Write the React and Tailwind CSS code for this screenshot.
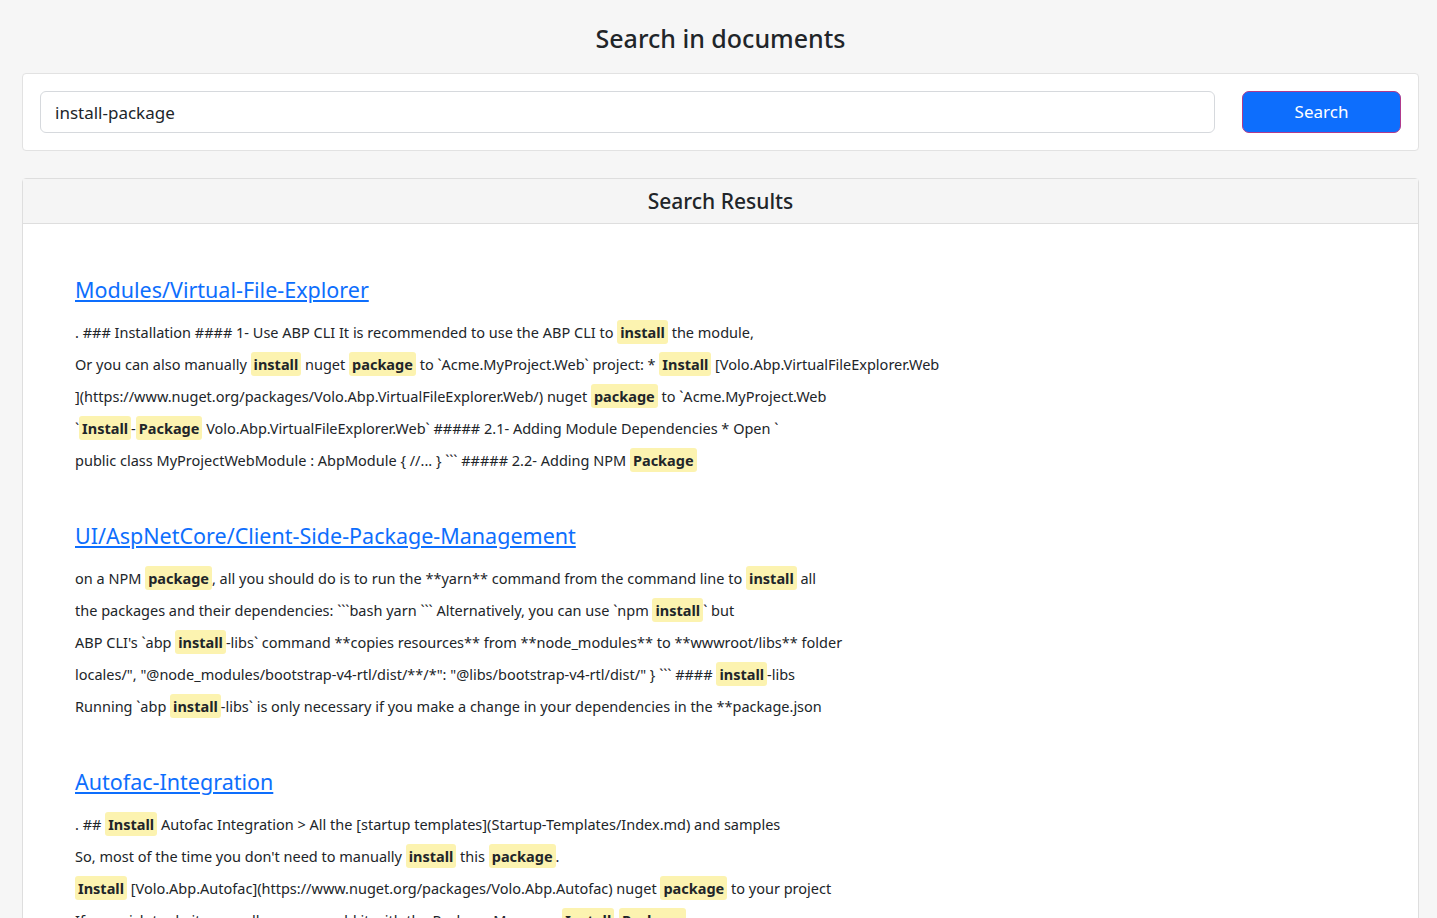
import React from 'react';

const results = [
    {
        title: 'Modules/Virtual-File-Explorer',
        lines: [
            ['. ### Installation #### 1- Use ABP CLI It is recommended to use the ABP CLI to ', { m: 'install' }, ' the module,'],
            ['Or you can also manually ', { m: 'install' }, ' nuget ', { m: 'package' }, ' to `Acme.MyProject.Web` project: * ', { m: 'Install' }, ' [Volo.Abp.VirtualFileExplorer.Web'],
            ['](https://www.nuget.org/packages/Volo.Abp.VirtualFileExplorer.Web/) nuget ', { m: 'package' }, ' to `Acme.MyProject.Web'],
            ['`', { m: 'Install' }, '-', { m: 'Package' }, ' Volo.Abp.VirtualFileExplorer.Web` ##### 2.1- Adding Module Dependencies * Open `'],
            ['public class MyProjectWebModule : AbpModule { //... } ``` ##### 2.2- Adding NPM ', { m: 'Package' }],
        ],
    },
    {
        title: 'UI/AspNetCore/Client-Side-Package-Management',
        lines: [
            ['on a NPM ', { m: 'package' }, ', all you should do is to run the **yarn** command from the command line to ', { m: 'install' }, ' all'],
            ['the packages and their dependencies: ```bash yarn ``` Alternatively, you can use `npm ', { m: 'install' }, '` but'],
            ["ABP CLI's `abp ", { m: 'install' }, '-libs` command **copies resources** from **node_modules** to **wwwroot/libs** folder'],
            ['locales/", "@node_modules/bootstrap-v4-rtl/dist/**/*": "@libs/bootstrap-v4-rtl/dist/" } ``` #### ', { m: 'install' }, '-libs'],
            ['Running `abp ', { m: 'install' }, '-libs` is only necessary if you make a change in your dependencies in the **package.json'],
        ],
    },
    {
        title: 'Autofac-Integration',
        lines: [
            ['. ## ', { m: 'Install' }, ' Autofac Integration > All the [startup templates](Startup-Templates/Index.md) and samples'],
            ["So, most of the time you don't need to manually ", { m: 'install' }, ' this ', { m: 'package' }, '.'],
            [{ m: 'Install' }, ' [Volo.Abp.Autofac](https://www.nuget.org/packages/Volo.Abp.Autofac) nuget ', { m: 'package' }, ' to your project'],
            ['If you wish to do it manually, you can add it with the Package Manager: ', { m: 'Install' }, '-', { m: 'Package' }],
        ],
    },
];

const Mark = ({ children }) => (
    <mark className="rounded-[3px] bg-[#fcf3b0] px-[3px] py-[2px] font-bold text-[#212529]">{children}</mark>
);

export default function App() {
    return (
        <div className="min-h-screen bg-[#f6f6f6] pl-[22px] pr-[18px] text-[#212529]" style={{ fontFamily: '"Noto Sans", sans-serif' }}>
            <h1 className="pb-[17px] pt-[20px] text-center text-[25px] font-medium leading-[36px]">Search in documents</h1>

            <div className="flex items-center gap-[27px] rounded-[4px] border border-[#e2e2e2] bg-white px-[17px] py-[17px]">
                <input
                    className="h-[42px] flex-1 rounded-[6px] border border-[#d6d9dd] px-[14px] text-[17px] outline-none"
                    defaultValue="install-package"
                />
                <button className="h-[42px] w-[159px] rounded-[7px] border border-[#b03a8c] bg-[#0d6efd] text-[17px] text-white">Search</button>
            </div>

            <div className="mt-[27px] rounded-[4px] border border-[#dedede] bg-white">
                <div className="border-b border-[#dedede] bg-[#f5f5f5] py-[9px] text-center text-[21px] font-medium leading-[26px]">Search Results</div>
                <div className="px-[52px] pt-[51px]">
                    {results.map((r) => (
                        <div key={r.title} className="mb-[45px]">
                            <a href="#" className="text-[21.5px] leading-[30px] text-[#0d6efd] underline">{r.title}</a>
                            <div className="mt-[11px]">
                                {r.lines.map((line, i) => (
                                    <p key={i} className="text-[14.5px] leading-[32px]">
                                        {line.map((p, j) => (typeof p === 'string' ? <span key={j}>{p}</span> : <Mark key={j}>{p.m}</Mark>))}
                                    </p>
                                ))}
                            </div>
                        </div>
                    ))}
                </div>
            </div>
        </div>
    );
}
